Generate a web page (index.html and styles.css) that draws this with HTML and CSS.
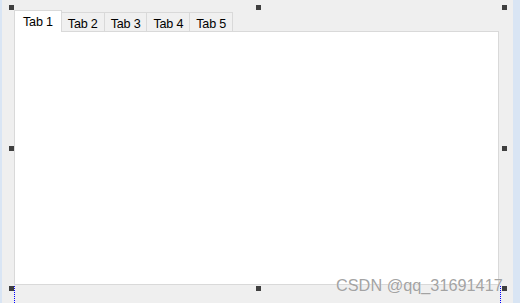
FILE: index.html
```html
<!DOCTYPE html>
<html>
<head>
<meta charset="utf-8">
<link rel="stylesheet" href="styles.css">
</head>
<body>
<div class="frame">
  <div class="strip strip-left"></div>
  <div class="canvas">
    <div class="tabwidget">
      <div class="tabbar">
        <div class="tab tab-active">Tab 1</div>
        <div class="tab">Tab 2</div>
        <div class="tab">Tab 3</div>
        <div class="tab">Tab 4</div>
        <div class="tab">Tab 5</div>
      </div>
      <div class="pane"></div>
    </div>
    <span class="handle h-tl"></span>
    <span class="handle h-tm"></span>
    <span class="handle h-tr"></span>
    <span class="handle h-ml"></span>
    <span class="handle h-mr"></span>
    <span class="handle h-bl"></span>
    <span class="handle h-bm"></span>
    <span class="handle h-br"></span>
    <span class="guide guide-left"></span>
    <span class="guide guide-right"></span>
    <div class="watermark">CSDN @qq_31691417</div>
  </div>
  <div class="strip strip-right"></div>
</div>
</body>
</html>
```

FILE: styles.css
```css
html, body {
  margin: 0;
  padding: 0;
  background: #efefef;
}
.frame {
  display: flex;
  width: 520px;
  height: 303px;
  overflow: hidden;
  font-family: "Liberation Sans", Arial, sans-serif;
}
.strip {
  background: #d9e5f4;
  flex: none;
}
.strip-left { width: 2px; }
.strip-right { width: 7px; }
.canvas {
  flex: 1;
  position: relative;
  padding: 10px 14px 0 12px;
  background: #efefef;
}
.tabwidget {
  display: flex;
  flex-direction: column;
}
.tabbar {
  display: flex;
  align-items: flex-end;
  height: 21px;
  position: relative;
  z-index: 2;
}
.tab {
  font-size: 12.6px;
  letter-spacing: -0.2px;
  line-height: 14px;
  color: #000;
  padding: 4px 6px 0 6px;
  border: 1px solid #d9d9d9;
  border-bottom: none;
  background: #f0f0f0;
  margin-left: -1px;
}
.tab-active {
  margin-left: 0;
  background: #ffffff;
  padding: 4px 8px 3px 8px;
  margin-bottom: -1px;
  position: relative;
  z-index: 3;
}
.pane {
  height: 252px;
  background: #ffffff;
  border: 1px solid #d9d9d9;
}
.handle {
  position: absolute;
  width: 5px;
  height: 5px;
  background: #3f3f3f;
}
.h-tl { left: 7px; top: 5px; }
.h-tm { left: 254px; top: 5px; }
.h-tr { left: 500px; top: 5px; }
.h-ml { left: 7px; top: 146px; }
.h-mr { left: 500px; top: 146px; }
.h-bl { left: 7px; top: 286px; }
.h-bm { left: 254px; top: 286px; }
.h-br { left: 500px; top: 286px; }
.guide {
  position: absolute;
  top: 286px;
  bottom: 0;
  width: 0;
  border-left: 1px dotted #0000ff;
}
.guide-left { left: 12px; }
.guide-right { left: 498px; }
.watermark {
  position: absolute;
  left: 334px;
  top: 275px;
  font-size: 16.3px;
  line-height: 20px;
  color: #a3a3a3;
  text-shadow: 0 0 1px #ffffff;
  white-space: nowrap;
  z-index: 4;
}
```
